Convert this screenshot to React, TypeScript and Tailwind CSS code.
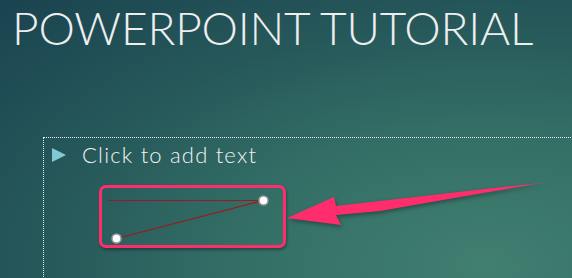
export default function App() {
  return (
    <div className="relative h-[278px] w-[572px] overflow-hidden bg-[radial-gradient(ellipse_at_85%_95%,#417f71_0%,#346f66_35%,#26585a_65%,#1a4350_100%)] font-['Lato',sans-serif]">
      {/* Slide title */}
      <h1 className="pl-[12px] pt-[4px] text-[46px] font-light leading-[48px] tracking-[-0.2px] text-[#eeeeee]">
        POWERPOINT TUTORIAL
      </h1>

      {/* Content placeholder */}
      <div className="ml-[43px] mt-[85px] h-[200px] w-[600px] border border-dotted border-white/90">
        <div className="flex items-center pl-[8px] pt-[3px]">
          <span className="h-0 w-0 border-y-[7px] border-l-[14px] border-y-transparent border-l-[#7fcad3]" />
          <span className="ml-[16px] text-[22px] font-light leading-[28px] tracking-[1.2px] text-[#f2f2f2]">
            Click to add text
          </span>
        </div>

        {/* Selected line shape */}
        <div className="ml-[55px] mt-[16px] h-[63px] w-[187px] rounded-[7px] border-[3px] border-[#ff2d6c] shadow-[1px_2px_3px_rgba(0,0,0,0.35)]">
          <svg width="181" height="57" viewBox="0 0 181 57">
            <line x1="6" y1="12.5" x2="161" y2="12.5" stroke="#9b1a1e" strokeWidth="1" />
            <line x1="14.5" y1="50.5" x2="161.5" y2="12.5" stroke="#9b1a1e" strokeWidth="1.2" />
            <circle cx="161.5" cy="12.5" r="4.5" fill="#fff" stroke="#9a9a9a" strokeWidth="1.5" />
            <circle cx="14.5" cy="50.5" r="4.5" fill="#fff" stroke="#9a9a9a" strokeWidth="1.5" />
          </svg>
        </div>
      </div>

      {/* Callout arrow */}
      <svg className="pointer-events-none absolute left-0 top-0" width="572" height="278" viewBox="0 0 572 278">
        <defs>
          <linearGradient id="tail" x1="287" y1="0" x2="550" y2="0" gradientUnits="userSpaceOnUse">
            <stop offset="0.9" stopColor="#ff2d6c" />
            <stop offset="1" stopColor="#ff2d6c" stopOpacity="0.2" />
          </linearGradient>
        </defs>
        <path
          d="M287 218 L334 197 L336 206 L548 182 L480 193.5 L380 211 L336 215 L341 225 Z"
          fill="url(#tail)"
          style={{ filter: "drop-shadow(1px 2px 2px rgba(0,0,0,0.35))" }}
        />
      </svg>
    </div>
  );
}
